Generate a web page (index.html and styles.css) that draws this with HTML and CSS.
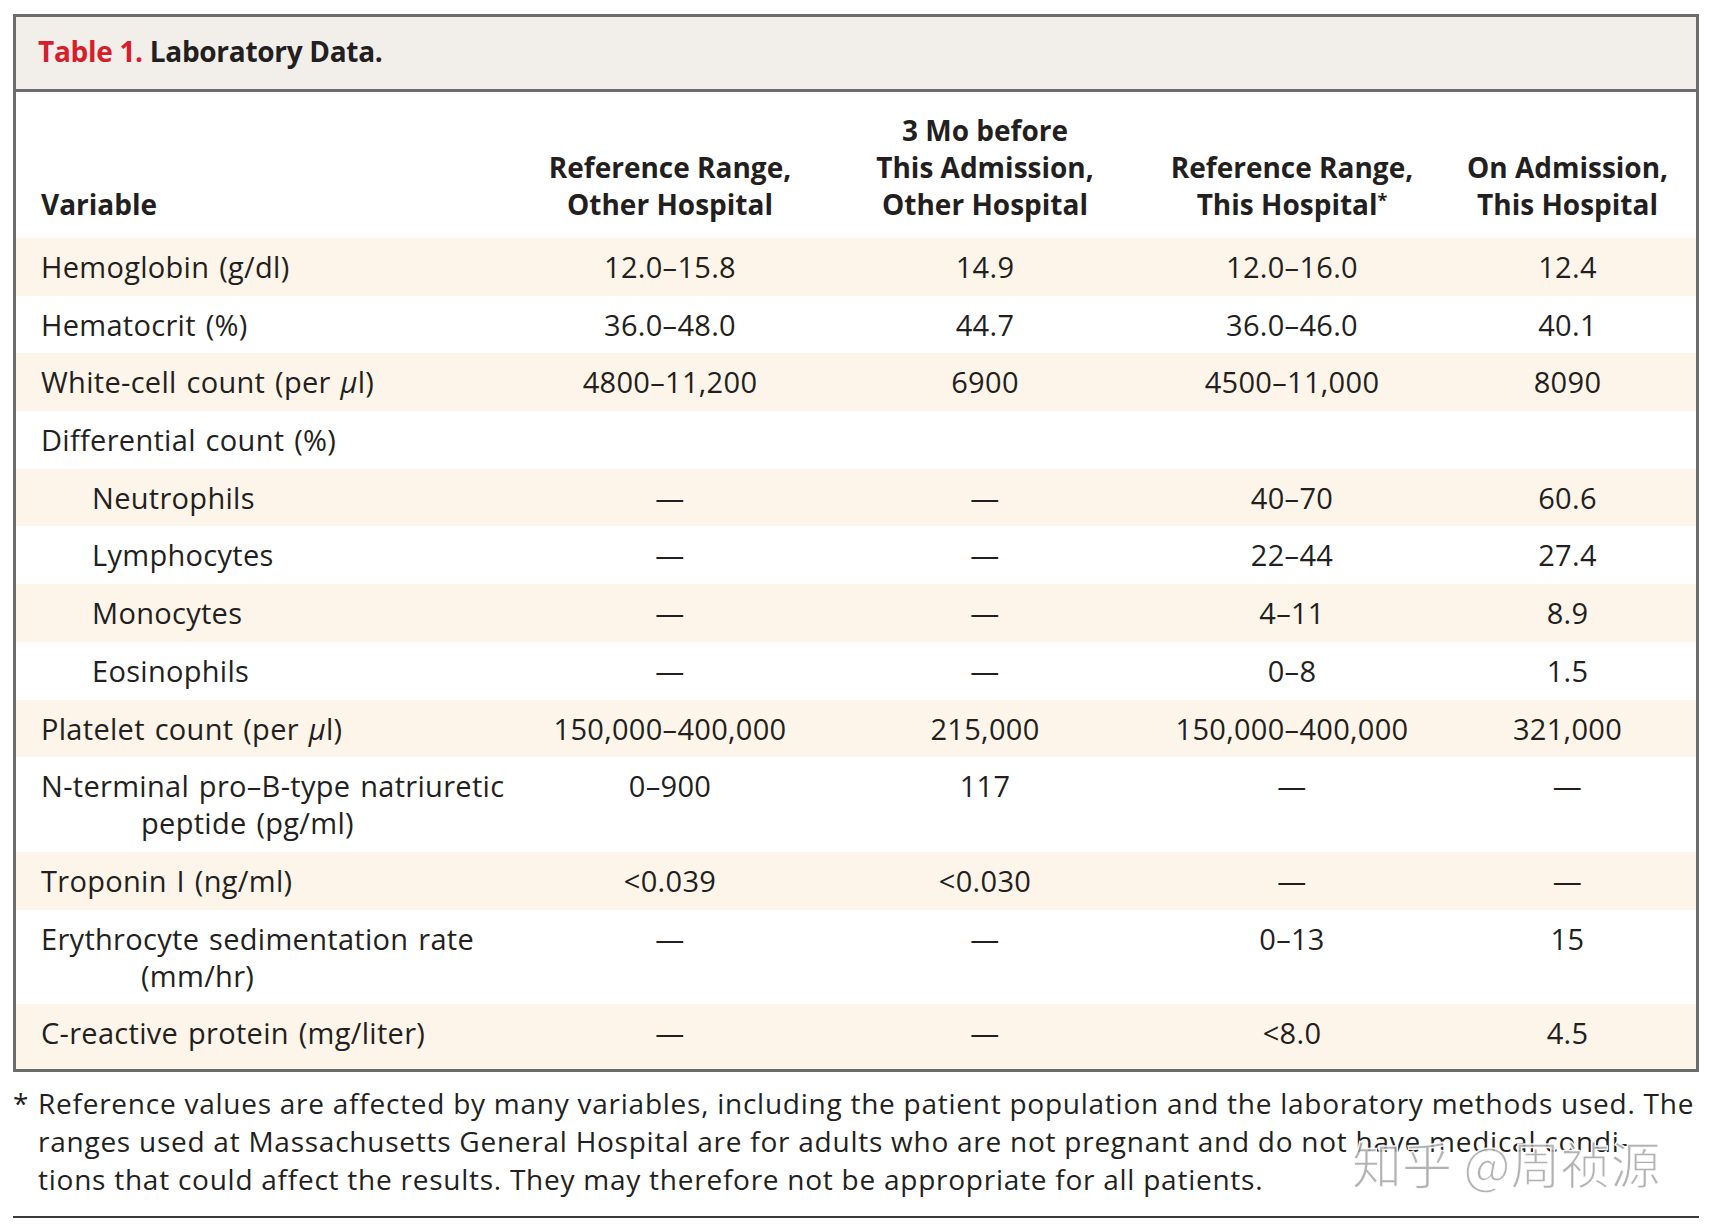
FILE: index.html
```html
<!DOCTYPE html>
<html lang="en">
<head>
<meta charset="utf-8">
<title>Table 1. Laboratory Data.</title>
<link rel="stylesheet" href="styles.css">
</head>
<body>
<div class="page">
  <div class="table-box">
    <div class="title-bar"><span class="label">Table 1.</span>&nbsp;Laboratory Data.</div>
    <table class="lab">
      <colgroup>
        <col class="c-var"><col class="c-1"><col class="c-2"><col class="c-3"><col class="c-4">
      </colgroup>
      <thead>
        <tr>
          <th class="var">Variable</th>
          <th>Reference Range,<br>Other Hospital</th>
          <th>3 Mo before<br>This Admission,<br>Other Hospital</th>
          <th>Reference Range,<br>This Hospital<span class="star">*</span></th>
          <th>On Admission,<br>This Hospital</th>
        </tr>
      </thead>
      <tbody>
        <tr><td class="var">Hemoglobin (g/dl)</td><td>12.0–15.8</td><td>14.9</td><td>12.0–16.0</td><td>12.4</td></tr>
        <tr><td class="var">Hematocrit (%)</td><td>36.0–48.0</td><td>44.7</td><td>36.0–46.0</td><td>40.1</td></tr>
        <tr><td class="var">White-cell count (per <i>µ</i>l)</td><td>4800–11,200</td><td>6900</td><td>4500–11,000</td><td>8090</td></tr>
        <tr><td class="var">Differential count (%)</td><td></td><td></td><td></td><td></td></tr>
        <tr><td class="var sub">Neutrophils</td><td>—</td><td>—</td><td>40–70</td><td>60.6</td></tr>
        <tr><td class="var sub">Lymphocytes</td><td>—</td><td>—</td><td>22–44</td><td>27.4</td></tr>
        <tr><td class="var sub">Monocytes</td><td>—</td><td>—</td><td>4–11</td><td>8.9</td></tr>
        <tr><td class="var sub">Eosinophils</td><td>—</td><td>—</td><td>0–8</td><td>1.5</td></tr>
        <tr><td class="var">Platelet count (per <i>µ</i>l)</td><td>150,000–400,000</td><td>215,000</td><td>150,000–400,000</td><td>321,000</td></tr>
        <tr><td class="var">N-terminal pro–B-type natriuretic<br>peptide (pg/ml)</td><td>0–900</td><td>117</td><td>—</td><td>—</td></tr>
        <tr><td class="var">Troponin I (ng/ml)</td><td>&lt;0.039</td><td>&lt;0.030</td><td>—</td><td>—</td></tr>
        <tr><td class="var">Erythrocyte sedimentation rate<br>(mm/hr)</td><td>—</td><td>—</td><td>0–13</td><td>15</td></tr>
        <tr class="last"><td class="var">C-reactive protein (mg/liter)</td><td>—</td><td>—</td><td>&lt;8.0</td><td>4.5</td></tr>
      </tbody>
    </table>
  </div>
  <div class="footnote">
    <span class="fn-mark">*</span>
    <p class="fn-text"><span class="ln">Reference values are affected by many variables, including the patient population and the laboratory methods used. The</span><span class="ln">ranges used at Massachusetts General Hospital are for adults who are not pregnant and do not have medical condi-</span><span class="ln">tions that could affect the results. They may therefore not be appropriate for all patients.</span></p>
  </div>
  <div class="rule"></div>
  <div class="watermark">知乎 @周祯源</div>
</div>
</body>
</html>
```

FILE: styles.css
```css
* { box-sizing: border-box; }

html, body {
  margin: 0;
  padding: 0;
  background: #ffffff;
}

body {
  font-family: "Open Sans", "Noto Sans", "Noto Sans CJK SC", sans-serif;
  color: #231f20;
}

.page {
  position: relative;
  width: 1711px;
  height: 1231px;
  padding: 14px 12px 0 13px;
}

.table-box {
  border: 3px solid #6c6c6c;
  width: 1686px;
  background: #ffffff;
}

.title-bar {
  height: 75px;
  display: flex;
  align-items: center;
  padding: 0 0 4px 22px;
  background: #f2eeea;
  border-bottom: 3px solid #6c6c6c;
  font-size: 28px;
  font-weight: 700;
  letter-spacing: -0.3px;
}

.title-bar .label {
  color: #d5202c;
}

.lab {
  width: 100%;
  border-collapse: collapse;
  table-layout: fixed;
}

.c-var { width: 499px; }
.c-1 { width: 310px; }
.c-2 { width: 320px; }
.c-3 { width: 294px; }
.c-4 { width: auto; }

.lab th {
  font-size: 28px;
  font-weight: 700;
  line-height: 37px;
  text-align: center;
  vertical-align: bottom;
  padding: 20px 0 15px;
  letter-spacing: 0;
}

.lab th.var {
  text-align: left;
  padding-left: 25px;
}

.star {
  font-size: 18px;
  vertical-align: 8px;
  line-height: 0;
}

.lab td {
  font-size: 29px;
  font-weight: 400;
  line-height: 37px;
  text-align: center;
  vertical-align: top;
  padding: 10px 0 10.7px;
  white-space: nowrap;
  letter-spacing: 0.3px;
  word-spacing: 2px;
}

.lab td.var {
  text-align: left;
  padding-left: 125px;
  text-indent: -100px;
}

.lab td.var.sub {
  padding-left: 76px;
  text-indent: 0;
}

.lab tbody tr:nth-child(odd) td {
  background: #fdf5e9;
}

.lab tbody tr.last td {
  padding-bottom: 18px;
}

.footnote {
  display: flex;
  margin-top: 12px;
  font-size: 28px;
  line-height: 38px;
  letter-spacing: 0.75px;
}

.fn-mark {
  width: 25px;
  flex: none;
}

.fn-text {
  margin: 0;
  flex: 1;
}

.fn-text .ln {
  display: block;
  white-space: nowrap;
}

.rule {
  margin-top: 18px;
  height: 2px;
  width: 1686px;
  background: #3a3a3a;
}

.watermark {
  position: absolute;
  left: 1352px;
  top: 1130px;
  font-family: "Noto Sans CJK SC", sans-serif;
  font-size: 50px;
  line-height: 64px;
  color: rgba(165, 165, 165, 0.85);
  -webkit-text-stroke: 1.5px rgba(255, 255, 255, 0.9);
  letter-spacing: 0;
  white-space: nowrap;
}
```
